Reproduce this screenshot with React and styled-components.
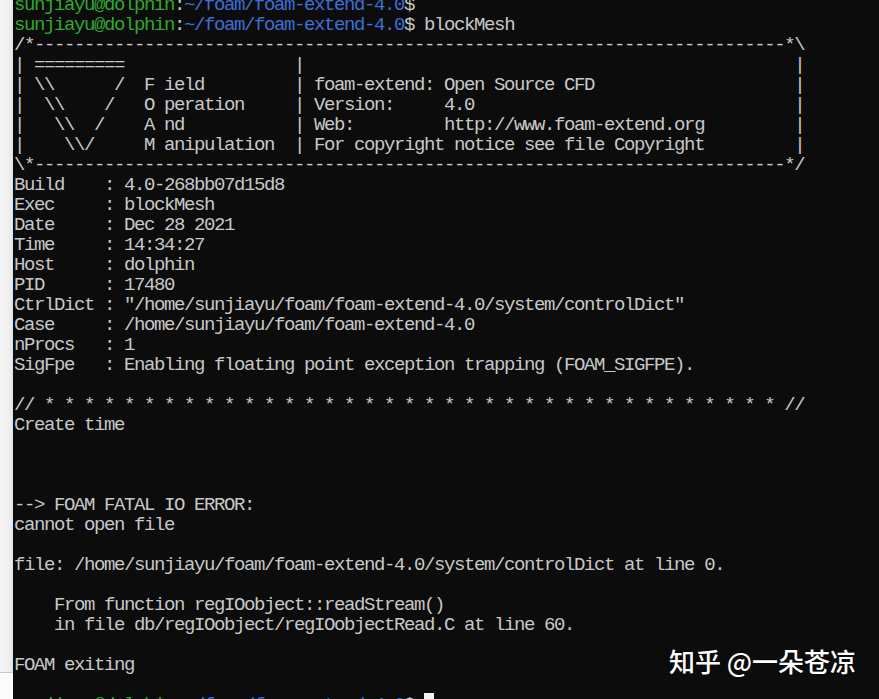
import styled, { createGlobalStyle } from 'styled-components';

const GlobalStyle = createGlobalStyle`
  html, body {
    margin: 0;
    padding: 0;
    background: #ffffff;
  }
  * {
    box-sizing: border-box;
  }
`;

const Page = styled.div`
  display: flex;
  width: 879px;
  height: 699px;
  overflow: hidden;
`;

const Gutter = styled.div`
  width: 13px;
  flex-shrink: 0;
  display: flex;
  flex-direction: column;
`;

const GutterTop = styled.div`
  height: 673px;
  background: linear-gradient(to right, #f6f6f6 0%, #efefef 70%, #e2e2e2 100%);
  border-bottom: 1px solid #c9c9c9;
`;

const GutterBottom = styled.div`
  flex: 1;
  background: #fbfbfb;
`;

const Terminal = styled.div`
  position: relative;
  flex: 1;
  background: #0c0c0c;
  overflow: hidden;
  padding-left: 1px;
`;

const Screen = styled.div`
  margin-top: -5px;
  font-family: "Liberation Mono", "DejaVu Sans Mono", monospace;
  font-size: 19px;
  letter-spacing: -1.4px;
  line-height: 20px;
  color: #c8c8c8;
`;

const Line = styled.div`
  height: 20px;
  white-space: pre;
`;

const User = styled.span`
  color: #2fa82f;
`;

const Path = styled.span`
  color: #3d6fd6;
`;

const Cursor = styled.span`
  display: inline-block;
  width: 10px;
  height: 19px;
  margin-top: -2px;
  vertical-align: top;
  background: #f2f2f2;
`;

const Watermark = styled.div`
  position: absolute;
  right: 23px;
  bottom: 24px;
  font-family: "Noto Sans CJK SC", "Noto Sans", sans-serif;
  font-size: 26px;
  font-weight: 500;
  line-height: 28px;
  color: #ffffff;
  white-space: nowrap;
  text-shadow: 0 0 2px rgba(0, 0, 0, 0.6);
`;

const stars = '// ' + '* '.repeat(37) + '//';

const output = [
  '/*---------------------------------------------------------------------------*\\',
  '| =========                 |                                                 |',
  '| \\\\      /  F ield         | foam-extend: Open Source CFD                    |',
  '|  \\\\    /   O peration     | Version:     4.0                                |',
  '|   \\\\  /    A nd           | Web:         http://www.foam-extend.org         |',
  '|    \\\\/     M anipulation  | For copyright notice see file Copyright         |',
  '\\*---------------------------------------------------------------------------*/',
  'Build    : 4.0-268bb07d15d8',
  'Exec     : blockMesh',
  'Date     : Dec 28 2021',
  'Time     : 14:34:27',
  'Host     : dolphin',
  'PID      : 17480',
  'CtrlDict : "/home/sunjiayu/foam/foam-extend-4.0/system/controlDict"',
  'Case     : /home/sunjiayu/foam/foam-extend-4.0',
  'nProcs   : 1',
  'SigFpe   : Enabling floating point exception trapping (FOAM_SIGFPE).',
  '',
  stars,
  'Create time',
  '',
  '',
  '',
  '--> FOAM FATAL IO ERROR:',
  'cannot open file',
  '',
  'file: /home/sunjiayu/foam/foam-extend-4.0/system/controlDict at line 0.',
  '',
  '    From function regIOobject::readStream()',
  '    in file db/regIOobject/regIOobjectRead.C at line 60.',
  '',
  'FOAM exiting',
  '',
];

const Prompt = ({ command, cursor }) => (
  <Line>
    <User>sunjiayu@dolphin</User>:<Path>~/foam/foam-extend-4.0</Path>$
    {command ? ` ${command}` : ''}
    {cursor && (
      <>
        {' '}
        <Cursor />
      </>
    )}
  </Line>
);

export default function App() {
  return (
    <>
      <GlobalStyle />
      <Page>
        <Gutter>
          <GutterTop />
          <GutterBottom />
        </Gutter>
        <Terminal>
          <Screen>
            <Prompt />
            <Prompt command="blockMesh" />
            {output.map((text, i) => (
              <Line key={i}>{text}</Line>
            ))}
            <Prompt cursor />
          </Screen>
          <Watermark>知乎 @一朵苍凉</Watermark>
        </Terminal>
      </Page>
    </>
  );
}
